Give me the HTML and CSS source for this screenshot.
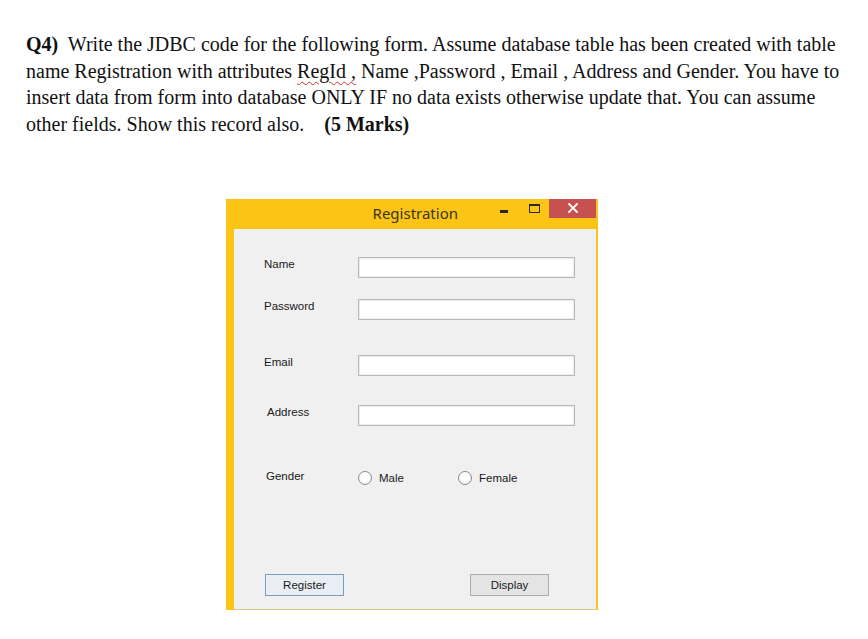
FILE: index.html
```html
<!DOCTYPE html>
<html>
<head>
<meta charset="utf-8">
<link rel="stylesheet" href="styles.css">
</head>
<body>
<div class="question">
<p class="q"><b>Q4)</b>&nbsp; Write the JDBC code for the following form. Assume database table has been created with table<br>name Registration with attributes <span class="sq">RegId ,</span> Name ,Password , Email , Address and Gender. You have to<br>insert data from form into database ONLY IF no data exists otherwise update that. You can assume<br>other fields. Show this record also. &nbsp;&nbsp; <b>(5 Marks)</b></p>
</div>
<div class="window">
  <div class="titlebar">
    <div class="title">Registration</div>
    <span class="min"></span>
    <span class="max"></span>
    <span class="close"><svg width="10" height="10" viewBox="0 0 10 10"><path d="M1 1 L9 9 M9 1 L1 9" stroke="#fff" stroke-width="1.8" stroke-linecap="square"/></svg></span>
  </div>
  <div class="client">
    <div class="row r-name"><div class="label">Name</div><div class="input"></div></div>
    <div class="row r-pass"><div class="label">Password</div><div class="input"></div></div>
    <div class="row r-email"><div class="label">Email</div><div class="input"></div></div>
    <div class="row r-addr"><div class="label l-addr">Address</div><div class="input"></div></div>
    <div class="row r-gender"><div class="label l-gender">Gender</div>
      <div class="radio"><span class="circle"></span>Male</div>
      <div class="radio"><span class="circle"></span>Female</div>
    </div>
    <div class="row r-buttons">
      <div class="btn primary">Register</div>
      <div class="btn second">Display</div>
    </div>
  </div>
</div>
</body>
</html>
```
FILE: styles.css
```css
html, body { margin: 0; padding: 0; background: #fff; }
body { width: 868px; height: 639px; overflow: hidden; }

.question { padding: 31px 0 0 26px; }
.q {
  margin: 0;
  font-family: "Liberation Serif", "Times New Roman", serif;
  font-size: 20px;
  line-height: 26.7px;
  color: #111;
  white-space: nowrap;
}
.sq { text-decoration: underline wavy #d03030; text-decoration-thickness: 1px; text-underline-offset: 3px; }

.window {
  margin: 61px 0 0 226px;
  width: 372px;
  box-sizing: border-box;
  padding: 0 2px 0 0;
  background: #fcc516;
}
.titlebar {
  height: 30px;
  display: flex;
  justify-content: flex-end;
  align-items: flex-start;
}
.title {
  font-family: "Noto Sans", "Open Sans", sans-serif;
  font-size: 15px;
  color: #3a3520;
  margin-top: 4px;
  margin-right: 42px;
  line-height: 20px;
}
.min {
  width: 8px; height: 3px; background: #2a2a2a;
  margin-top: 11px; margin-right: 21px;
}
.max {
  width: 9px; height: 6px;
  border: 1px solid #2a2a2a; border-top-width: 2px;
  margin-top: 5px; margin-right: 9px;
}
.close {
  width: 47px; height: 19px; background: #c75050;
  display: flex; align-items: center; justify-content: center;
}
.client {
  margin-left: 8px;
  height: 381px;
  background: #f0f0f0;
  border-bottom: 1px solid #d9c88a;
  box-sizing: border-box;
  padding-top: 0.1px;
  font-family: "Liberation Sans", Arial, sans-serif;
  font-size: 11.5px;
  color: #1a1a1a;
}
.row { display: flex; align-items: flex-start; }
.label { width: 124px; box-sizing: border-box; padding-left: 30px; line-height: 14px; margin-top: 0; }
.l-addr { padding-left: 33px; }
.l-gender { padding-left: 32px; }
.input {
  width: 217px; height: 21px; box-sizing: border-box;
  background: #fff; border: 1px solid #b9b9b9;
  box-shadow: inset 0 0 0 1px #ececec;
}
.r-name { margin-top: 28px; }
.r-pass { margin-top: 21px; }
.r-email { margin-top: 35px; }
.r-addr { margin-top: 29px; }
.r-gender { margin-top: 43px; height: 16px; }
.radio { display: flex; align-items: center; width: 100px; line-height: 16px; margin-top: 1px; }
.circle {
  width: 12px; height: 12px; border: 1px solid #8c8c8c; border-radius: 50%;
  background: radial-gradient(circle at 50% 40%, #fff 40%, #e6e6e6 100%);
  margin-right: 7px;
}
.r-buttons { margin-top: 89px; }
.btn {
  width: 79px; height: 22px; box-sizing: border-box;
  border: 1px solid #adadad; background: #e4e4e4;
  text-align: center; line-height: 20px;
}
.primary { margin-left: 31px; border-color: #7a9cc0; background: #e8eef3; }
.second { margin-left: 126px; }
```
